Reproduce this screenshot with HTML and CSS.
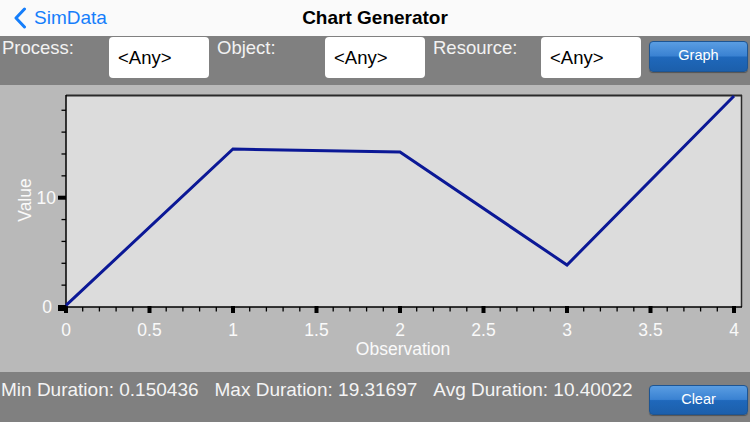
FILE: index.html
```html
<!DOCTYPE html>
<html>
<head>
<meta charset="utf-8">
<link rel="stylesheet" href="styles.css">
</head>
<body>
<div class="app">
  <header class="nav">
    <div class="back">
      <svg class="chev" width="14" height="22" viewBox="0 0 14 22"><path d="M11.5 2 L3 11 L11.5 20" fill="none" stroke="#157efb" stroke-width="3" stroke-linecap="round" stroke-linejoin="round"/></svg>
      <span>SimData</span>
    </div>
    <div class="title">Chart Generator</div>
  </header>
  <div class="toolbar">
    <span class="lbl lbl-process">Process:</span>
    <div class="field">&lt;Any&gt;</div>
    <span class="lbl lbl-object">Object:</span>
    <div class="field">&lt;Any&gt;</div>
    <span class="lbl lbl-resource">Resource:</span>
    <div class="field">&lt;Any&gt;</div>
    <div class="btn btn-graph">Graph</div>
  </div>
  <div class="chart">
    <svg width="750" height="287" viewBox="0 85 750 287" id="plot">
      <rect x="66" y="95" width="676" height="212" fill="#dcdcdc"/>
      <line x1="66" y1="95.5" x2="742" y2="95.5" stroke="#2a2a2a" stroke-width="2"/>
      <line x1="741.5" y1="95" x2="741.5" y2="307" stroke="#2a2a2a" stroke-width="1.5"/>
      <line x1="66" y1="95" x2="66" y2="308" stroke="#000" stroke-width="1.5"/>
      <line x1="65" y1="307" x2="742" y2="307" stroke="#000" stroke-width="1.5"/>
      <g id="ticks" stroke="#000" stroke-width="1.3"></g>
      <g id="majors" fill="#000"></g>
      <polyline points="66,305.4 233,149 400,152 567,265 734,96" fill="none" stroke="#0b1896" stroke-width="3" stroke-linejoin="miter"/>
      <g class="axis-text" id="xlabels"></g>
      <text class="axis-text" x="52" y="313" text-anchor="end">0</text>
      <text class="axis-text" x="56" y="204" text-anchor="end">10</text>
      <text class="axis-text" x="403" y="355" text-anchor="middle">Observation</text>
      <text class="axis-text" x="0" y="0" text-anchor="middle" transform="translate(31 200) rotate(-90)">Value</text>
    </svg>
  </div>
  <footer class="stats">
    <div class="stat-text">
      <span class="stat">Min Duration: 0.150436</span>
      <span class="stat">Max Duration: 19.31697</span>
      <span class="stat">Avg Duration: 10.40022</span>
    </div>
    <div class="btn btn-clear">Clear</div>
  </footer>
</div>
<script src="chart.js"></script>
</body>
</html>
```

FILE: chart.js
```js
(function () {
  var ns = "http://www.w3.org/2000/svg";
  var ticks = document.getElementById("ticks");
  var majors = document.getElementById("majors");
  var xl = document.getElementById("xlabels");
  function el(name, attrs, parent) {
    var e = document.createElementNS(ns, name);
    for (var k in attrs) e.setAttribute(k, attrs[k]);
    parent.appendChild(e);
    return e;
  }
  for (var i = 0; i <= 40; i++) {
    var v = i / 10;
    var x = 66 + v * 167;
    if (i % 5 === 0) {
      el("rect", { x: x - 2, y: 306, width: 4, height: 7 }, majors);
      var t = el("text", { x: x, y: 336, "text-anchor": "middle" }, xl);
      t.textContent = String(v);
    } else {
      el("line", { x1: x, y1: 307, x2: x, y2: 311.5 }, ticks);
    }
  }
  for (var j = 2; j <= 18; j += 2) {
    if (j === 10) continue;
    var y = 307 - j * 10.93;
    el("line", { x1: 61.5, y1: y, x2: 66, y2: y }, ticks);
  }
  el("rect", { x: 58, y: 305, width: 9, height: 6 }, majors);
  el("rect", { x: 58, y: 307 - 10 * 10.93 - 2, width: 8, height: 4 }, majors);
})();
```

FILE: styles.css
```css
html, body {
  margin: 0;
  padding: 0;
}
body {
  width: 750px;
  height: 422px;
  overflow: hidden;
  font-family: "Liberation Sans", Arial, sans-serif;
  background: #fff;
}
.app {
  display: flex;
  flex-direction: column;
  width: 750px;
  height: 422px;
}
.nav {
  height: 36px;
  flex: none;
  position: relative;
  display: flex;
  align-items: center;
  background: #fafafa;
}
.back {
  display: flex;
  align-items: center;
  gap: 7px;
  padding-left: 13px;
  color: #157efb;
  font-size: 19px;
}
.chev {
  display: block;
}
.title {
  position: absolute;
  left: 0;
  right: 0;
  top: 7px;
  text-align: center;
  font-size: 19px;
  font-weight: bold;
  color: #000;
  pointer-events: none;
}
.toolbar {
  height: 49px;
  flex: none;
  background: #808080;
  display: flex;
  align-items: flex-start;
  padding-left: 2px;
  box-sizing: border-box;
}
.lbl {
  color: #f2f2f2;
  font-size: 18.5px;
  line-height: 22px;
  margin-top: 1px;
}
.lbl-process { width: 107px; }
.lbl-object { width: 108px; margin-left: 8px; }
.lbl-resource { width: 108px; margin-left: 8px; }
.field {
  width: 100px;
  height: 41px;
  margin-top: 1px;
  background: #fff;
  border-radius: 4px;
  box-sizing: border-box;
  padding-left: 9px;
  padding-top: 10px;
  font-size: 18.5px;
  line-height: 22px;
  color: #000;
}
.btn {
  box-sizing: border-box;
  border-radius: 4px;
  color: #fff;
  font-size: 14.5px;
  text-align: center;
  background: linear-gradient(to bottom, #5a9de2 0%, #3a82d2 48%, #1f68bb 52%, #1c5fab 100%);
  border: 1px solid #1d5593;
  box-shadow: 0 1px 1px rgba(0,0,0,0.35);
}
.btn-graph {
  width: 99px;
  height: 31px;
  margin-left: 8px;
  margin-top: 5px;
  line-height: 27px;
}
.chart {
  height: 287px;
  flex: none;
  background: #b9b9b9;
}
.chart svg {
  display: block;
}
.axis-text, .axis-text text {
  fill: #fafafa;
  font-family: "Liberation Sans", Arial, sans-serif;
  font-size: 17.5px;
}
.stats {
  flex: 1;
  background: #808080;
  display: flex;
  align-items: flex-start;
  justify-content: space-between;
  padding-left: 1px;
  padding-right: 2px;
}
.stat-text {
  display: flex;
  gap: 16px;
  margin-top: 7px;
  color: #f4f4f4;
  font-size: 19px;
  line-height: 22px;
}
.btn-clear {
  width: 99px;
  height: 30px;
  margin-top: 13px;
  line-height: 26px;
}
```
